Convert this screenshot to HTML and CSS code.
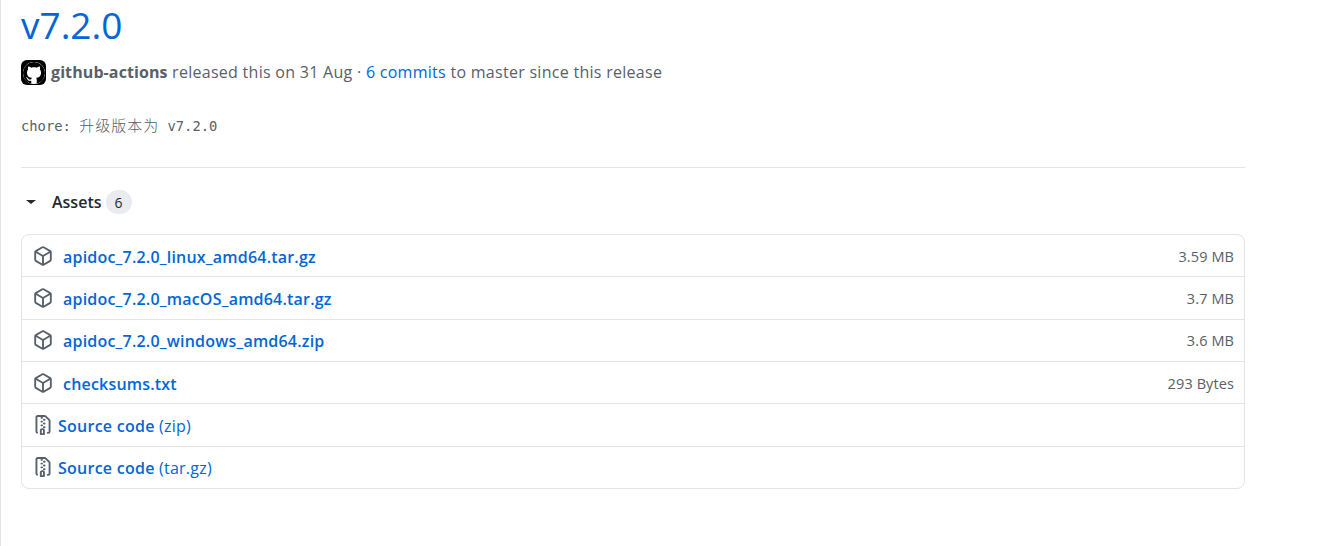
FILE: index.html
```html
<!DOCTYPE html>
<html lang="en">
<head>
<meta charset="utf-8">
<title>v7.2.0</title>
<link rel="stylesheet" href="styles.css">
</head>
<body>
<main class="release">
  <h1 class="title"><a href="#">v7.2.0</a></h1>
  <div class="meta">
    <span class="avatar">
      <svg class="avatar-mark" viewBox="0 0 16 16" width="22" height="22"><path fill="#000" d="M8 0c4.42 0 8 3.58 8 8a8.013 8.013 0 0 1-5.45 7.59c-.4.08-.55-.17-.55-.38 0-.27.01-1.13.01-2.2 0-.75-.25-1.23-.54-1.48 1.78-.2 3.65-.88 3.65-3.95 0-.88-.31-1.59-.82-2.15.08-.2.36-1.02-.08-2.12 0 0-.67-.22-2.2.82-.64-.18-1.32-.27-2-.27-.68 0-1.36.09-2 .27-1.53-1.03-2.2-.82-2.2-.82-.44 1.1-.16 1.92-.08 2.12-.51.56-.82 1.28-.82 2.15 0 3.06 1.86 3.75 3.64 3.95-.23.2-.44.55-.51 1.07-.46.21-1.61.55-2.33-.66-.15-.24-.6-.83-1.23-.82-.67.01-.27.38.01.53.34.19.73.9.82 1.13.16.45.68 1.31 2.69.94 0 .67.01 1.3.01 1.49 0 .21-.15.45-.55.38A7.995 7.995 0 0 1 0 8c0-4.42 3.58-8 8-8Z"/></svg>
    </span>
    <span class="meta-text"><b class="author">github-actions</b> released this on 31 Aug · <a href="#">6 commits</a> to master since this release</span>
  </div>
  <pre class="notes">chore: <span class="cjk">升级版本为</span> v7.2.0</pre>
  <hr class="rule">
  <div class="assets-head">
    <span class="caret"></span>
    <span class="assets-label">Assets</span>
    <span class="counter">6</span>
  </div>
  <ul class="assets">
    <li class="row"><svg class="ico" viewBox="0 0 16 16" width="20" height="20"><path d="m8.878.392 5.25 3.045c.54.314.872.89.872 1.514v6.098a1.75 1.75 0 0 1-.872 1.514l-5.25 3.045a1.75 1.75 0 0 1-1.756 0l-5.25-3.045A1.75 1.75 0 0 1 1 11.049V4.951c0-.624.332-1.201.872-1.514L7.122.392a1.75 1.75 0 0 1 1.756 0ZM7.875 1.69l-4.63 2.685L8 7.133l4.755-2.758-4.63-2.685a.248.248 0 0 0-.25 0ZM2.5 5.677v5.372c0 .09.047.171.125.216l4.625 2.683V8.432Zm6.25 8.271 4.625-2.683a.25.25 0 0 0 .125-.216V5.677L8.75 8.432Z"/></svg><a class="name" href="#">apidoc_7.2.0_linux_amd64.tar.gz</a><span class="size">3.59 MB</span></li>
    <li class="row"><svg class="ico" viewBox="0 0 16 16" width="20" height="20"><path d="m8.878.392 5.25 3.045c.54.314.872.89.872 1.514v6.098a1.75 1.75 0 0 1-.872 1.514l-5.25 3.045a1.75 1.75 0 0 1-1.756 0l-5.25-3.045A1.75 1.75 0 0 1 1 11.049V4.951c0-.624.332-1.201.872-1.514L7.122.392a1.75 1.75 0 0 1 1.756 0ZM7.875 1.69l-4.63 2.685L8 7.133l4.755-2.758-4.63-2.685a.248.248 0 0 0-.25 0ZM2.5 5.677v5.372c0 .09.047.171.125.216l4.625 2.683V8.432Zm6.25 8.271 4.625-2.683a.25.25 0 0 0 .125-.216V5.677L8.75 8.432Z"/></svg><a class="name" href="#">apidoc_7.2.0_macOS_amd64.tar.gz</a><span class="size">3.7 MB</span></li>
    <li class="row"><svg class="ico" viewBox="0 0 16 16" width="20" height="20"><path d="m8.878.392 5.25 3.045c.54.314.872.89.872 1.514v6.098a1.75 1.75 0 0 1-.872 1.514l-5.25 3.045a1.75 1.75 0 0 1-1.756 0l-5.25-3.045A1.75 1.75 0 0 1 1 11.049V4.951c0-.624.332-1.201.872-1.514L7.122.392a1.75 1.75 0 0 1 1.756 0ZM7.875 1.69l-4.63 2.685L8 7.133l4.755-2.758-4.63-2.685a.248.248 0 0 0-.25 0ZM2.5 5.677v5.372c0 .09.047.171.125.216l4.625 2.683V8.432Zm6.25 8.271 4.625-2.683a.25.25 0 0 0 .125-.216V5.677L8.75 8.432Z"/></svg><a class="name" href="#">apidoc_7.2.0_windows_amd64.zip</a><span class="size">3.6 MB</span></li>
    <li class="row"><svg class="ico" viewBox="0 0 16 16" width="20" height="20"><path d="m8.878.392 5.25 3.045c.54.314.872.89.872 1.514v6.098a1.75 1.75 0 0 1-.872 1.514l-5.25 3.045a1.75 1.75 0 0 1-1.756 0l-5.25-3.045A1.75 1.75 0 0 1 1 11.049V4.951c0-.624.332-1.201.872-1.514L7.122.392a1.75 1.75 0 0 1 1.756 0ZM7.875 1.69l-4.63 2.685L8 7.133l4.755-2.758-4.63-2.685a.248.248 0 0 0-.25 0ZM2.5 5.677v5.372c0 .09.047.171.125.216l4.625 2.683V8.432Zm6.25 8.271 4.625-2.683a.25.25 0 0 0 .125-.216V5.677L8.75 8.432Z"/></svg><a class="name" href="#">checksums.txt</a><span class="size">293 Bytes</span></li>
    <li class="row source"><svg class="ico" viewBox="0 0 16 16" width="20" height="20"><path d="M3.5 1.75v11.5c0 .09.048.173.126.217a.75.75 0 0 1-.752 1.298A1.748 1.748 0 0 1 2 13.25V1.75C2 .784 2.784 0 3.75 0h5.586c.464 0 .909.185 1.237.513l2.914 2.914c.329.328.513.773.513 1.237v8.586A1.75 1.75 0 0 1 12.25 15h-.5a.75.75 0 0 1 0-1.5h.5a.25.25 0 0 0 .25-.25V4.664a.25.25 0 0 0-.073-.177L9.513 1.573a.25.25 0 0 0-.177-.073H7.25a.75.75 0 0 1 0 1.5h-.5a.75.75 0 0 1 0-1.5h-3a.25.25 0 0 0-.25.25Zm3.75 8.75h.5c.966 0 1.75.784 1.75 1.75v3a.75.75 0 0 1-.75.75h-2.5a.75.75 0 0 1-.75-.75v-3c0-.966.784-1.75 1.75-1.75ZM6 5.25a.75.75 0 0 1 .75-.75h.5a.75.75 0 0 1 0 1.5h-.5A.75.75 0 0 1 6 5.25Zm.75 2.25h.5a.75.75 0 0 1 0 1.5h-.5a.75.75 0 0 1 0-1.5ZM8 6.75A.75.75 0 0 1 8.75 6h.5a.75.75 0 0 1 0 1.5h-.5A.75.75 0 0 1 8 6.75ZM8.75 3h.5a.75.75 0 0 1 0 1.5h-.5a.75.75 0 0 1 0-1.5ZM8 9.75A.75.75 0 0 1 8.75 9h.5a.75.75 0 0 1 0 1.5h-.5A.75.75 0 0 1 8 9.75Zm-1 2.5v2.25h1v-2.25a.25.25 0 0 0-.25-.25h-.5a.25.25 0 0 0-.25.25Z"/></svg><a class="name" href="#"><b class="src">Source code</b> <span class="ext">(zip)</span></a></li>
    <li class="row source"><svg class="ico" viewBox="0 0 16 16" width="20" height="20"><path d="M3.5 1.75v11.5c0 .09.048.173.126.217a.75.75 0 0 1-.752 1.298A1.748 1.748 0 0 1 2 13.25V1.75C2 .784 2.784 0 3.75 0h5.586c.464 0 .909.185 1.237.513l2.914 2.914c.329.328.513.773.513 1.237v8.586A1.75 1.75 0 0 1 12.25 15h-.5a.75.75 0 0 1 0-1.5h.5a.25.25 0 0 0 .25-.25V4.664a.25.25 0 0 0-.073-.177L9.513 1.573a.25.25 0 0 0-.177-.073H7.25a.75.75 0 0 1 0 1.5h-.5a.75.75 0 0 1 0-1.5h-3a.25.25 0 0 0-.25.25Zm3.75 8.75h.5c.966 0 1.75.784 1.75 1.75v3a.75.75 0 0 1-.75.75h-2.5a.75.75 0 0 1-.75-.75v-3c0-.966.784-1.75 1.75-1.75ZM6 5.25a.75.75 0 0 1 .75-.75h.5a.75.75 0 0 1 0 1.5h-.5A.75.75 0 0 1 6 5.25Zm.75 2.25h.5a.75.75 0 0 1 0 1.5h-.5a.75.75 0 0 1 0-1.5ZM8 6.75A.75.75 0 0 1 8.75 6h.5a.75.75 0 0 1 0 1.5h-.5A.75.75 0 0 1 8 6.75ZM8.75 3h.5a.75.75 0 0 1 0 1.5h-.5a.75.75 0 0 1 0-1.5ZM8 9.75A.75.75 0 0 1 8.75 9h.5a.75.75 0 0 1 0 1.5h-.5A.75.75 0 0 1 8 9.75Zm-1 2.5v2.25h1v-2.25a.25.25 0 0 0-.25-.25h-.5a.25.25 0 0 0-.25.25Z"/></svg><a class="name" href="#"><b class="src">Source code</b> <span class="ext">(tar.gz)</span></a></li>
  </ul>
</main>
</body>
</html>
```
FILE: styles.css
```css
html, body {
  margin: 0;
  height: 100%;
  background: #fff;
}
body {
  font-family: "Open Sans", "Noto Sans", sans-serif;
  font-size: 16px;
  color: #586069;
  overflow: hidden;
}
a { text-decoration: none; color: #0366d6; }
.release {
  box-sizing: border-box;
  width: 1245px;
  height: 546px;
  border-left: 1px solid #e1e4e8;
  padding-left: 20px;
}
.title {
  margin: 0;
  height: 54px;
  font-size: 37px;
  line-height: 50px;
  font-weight: 400;
}
.meta {
  display: flex;
  align-items: center;
  gap: 5px;
  margin-top: 6px;
  height: 25px;
}
.avatar {
  display: flex;
  align-items: center;
  justify-content: center;
  width: 25px;
  height: 25px;
  border-radius: 6px;
  background: #000;
}
.avatar-mark {
  border-radius: 50%;
  background: #fff;
}
.meta-text {
  padding-bottom: 2px;
  font-size: 16px;
  letter-spacing: 0.28px;
  white-space: nowrap;
}
.author { font-weight: 700; letter-spacing: 0.1px; }
.notes {
  margin: 31px 0 0;
  height: 20px;
  font-family: "DejaVu Sans Mono", "Noto Sans CJK SC", monospace;
  font-size: 13.8px;
  line-height: 20px;
  color: #586069;
}
.cjk {
  font-family: "Noto Sans CJK SC", sans-serif;
  font-size: 15px;
  font-weight: 300;
  letter-spacing: 1px;
  line-height: 0;
}
.rule {
  margin: 31px 0 0;
  border: 0;
  height: 1px;
  background: #e1e4e8;
}
.assets-head {
  display: flex;
  align-items: center;
  height: 26px;
  margin-top: 21px;
}
.caret {
  width: 0;
  height: 0;
  margin-left: 5px;
  border-left: 5px solid transparent;
  border-right: 5px solid transparent;
  border-top: 4px solid #24292e;
}
.assets-label {
  margin-left: 16px;
  font-weight: 600;
  color: #24292e;
}
.counter {
  display: flex;
  align-items: center;
  justify-content: center;
  width: 26px;
  height: 24px;
  margin-left: 4px;
  border-radius: 12px;
  background: #e9ebee;
  color: #24292e;
  font-size: 14px;
}
.assets {
  list-style: none;
  margin: 19px 0 0;
  padding: 0;
  border: 1px solid #e1e4e8;
  border-radius: 8px;
}
.row {
  display: flex;
  align-items: center;
  height: 41.35px;
  padding: 0 10px 0 11px;
  border-top: 1px solid #e1e4e8;
}
.row:first-child { border-top: 0; }
.ico { fill: #586069; flex: none; }
.name { margin-left: 10px; padding-top: 2px; font-weight: 600; letter-spacing: 0.2px; white-space: nowrap; }
.size { margin-left: auto; padding-top: 1px; font-size: 14.5px; letter-spacing: 0.1px; }
.source .name { margin-left: 5px; letter-spacing: 0.25px; }
.src { font-weight: 600; }
.ext { font-weight: 400; }
```
